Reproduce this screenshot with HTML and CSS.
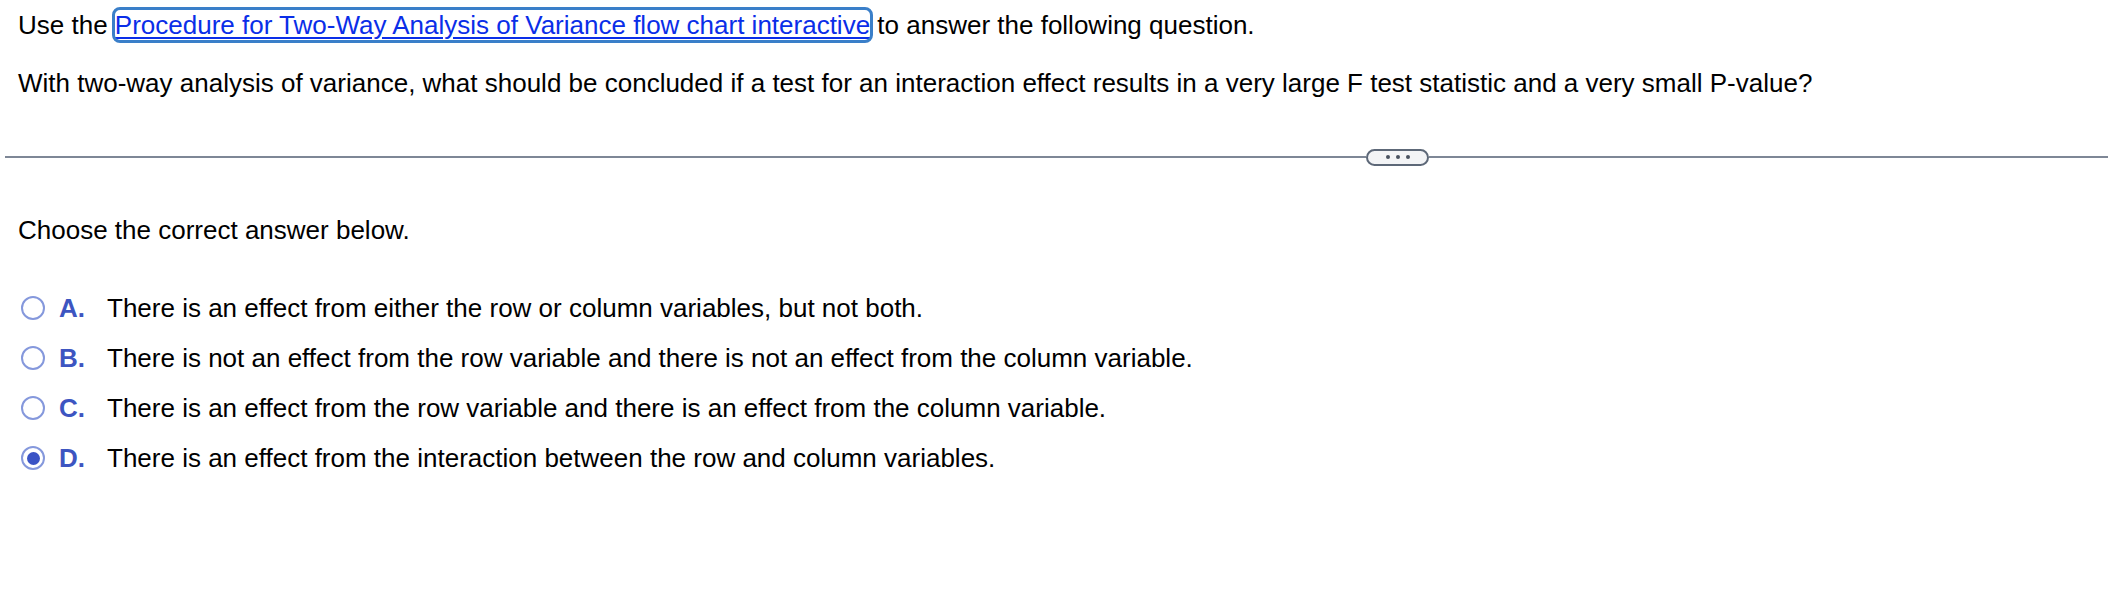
FILE: index.html
```html
<!DOCTYPE html>
<html lang="en">
<head>
<meta charset="utf-8">
<title>Two-Way Analysis of Variance</title>
<link rel="stylesheet" href="styles.css">
</head>
<body>
<div class="content">
  <p class="intro">Use the <a class="link" href="#">Procedure for Two-Way Analysis of Variance flow chart interactive</a> to answer the following question.</p>
  <p class="prompt">With two-way analysis of variance, what should be concluded if a test for an interaction effect results in a very large F test statistic and a very small P-value?</p>
</div>
<div class="divider">
  <div class="rule rule-left"></div>
  <div class="pill"><span class="dot"></span><span class="dot"></span><span class="dot"></span></div>
  <div class="rule rule-right"></div>
</div>
<div class="content">
  <p class="choose">Choose the correct answer below.</p>
  <ul class="options">
    <li class="option"><span class="radio"></span><span class="letter">A.</span><span class="text">There is an effect from either the row or column variables, but not both.</span></li>
    <li class="option"><span class="radio"></span><span class="letter">B.</span><span class="text">There is not an effect from the row variable and there is not an effect from the column variable.</span></li>
    <li class="option"><span class="radio"></span><span class="letter">C.</span><span class="text">There is an effect from the row variable and there is an effect from the column variable.</span></li>
    <li class="option"><span class="radio radio-on"></span><span class="letter">D.</span><span class="text">There is an effect from the interaction between the row and column variables.</span></li>
  </ul>
</div>
</body>
</html>
```
FILE: styles.css
```css
html, body {
  margin: 0;
  padding: 0;
  background: #ffffff;
}
body {
  font-family: "Liberation Sans", Arial, Helvetica, sans-serif;
  font-size: 26px;
  color: #000000;
}
.content {
  padding-left: 18px;
}
.intro {
  margin: 0;
  padding-top: 10px;
  line-height: 30px;
}
.link {
  color: #0a2ee8;
  text-decoration: underline;
  text-underline-offset: 3px;
  outline: 3px solid #3a7fc9;
  outline-offset: 0;
  border-radius: 5px;
}
.prompt {
  margin: 28px 0 0;
  line-height: 30px;
}
.divider {
  display: flex;
  align-items: center;
  height: 18px;
  margin: 50px 0 0 5px;
}
.rule {
  height: 2px;
  background: #7e8796;
}
.rule-left {
  width: 1361px;
}
.rule-right {
  flex: 1;
}
.pill {
  box-sizing: border-box;
  width: 63px;
  height: 17px;
  border: 2px solid #5d6878;
  border-radius: 9px;
  background: #f3f4f6;
  display: flex;
  align-items: center;
  justify-content: center;
  gap: 6px;
}
.dot {
  width: 4px;
  height: 4px;
  border-radius: 50%;
  background: #4a5260;
}
.choose {
  margin: 49px 0 0;
  line-height: 30px;
}
.options {
  list-style: none;
  margin: 38px 0 0;
  padding: 0;
}
.option {
  display: flex;
  align-items: center;
  height: 50px;
}
.radio {
  box-sizing: border-box;
  width: 24px;
  height: 24px;
  margin-left: 3px;
  border: 2.5px solid #8598dc;
  border-radius: 50%;
  display: flex;
  align-items: center;
  justify-content: center;
  flex-shrink: 0;
}
.radio-on::after {
  content: "";
  width: 13px;
  height: 13px;
  border-radius: 50%;
  background: #3a53c5;
}
.letter {
  width: 48px;
  margin-left: 14px;
  font-weight: bold;
  color: #3d55c1;
}
.text {
  white-space: nowrap;
}
```
